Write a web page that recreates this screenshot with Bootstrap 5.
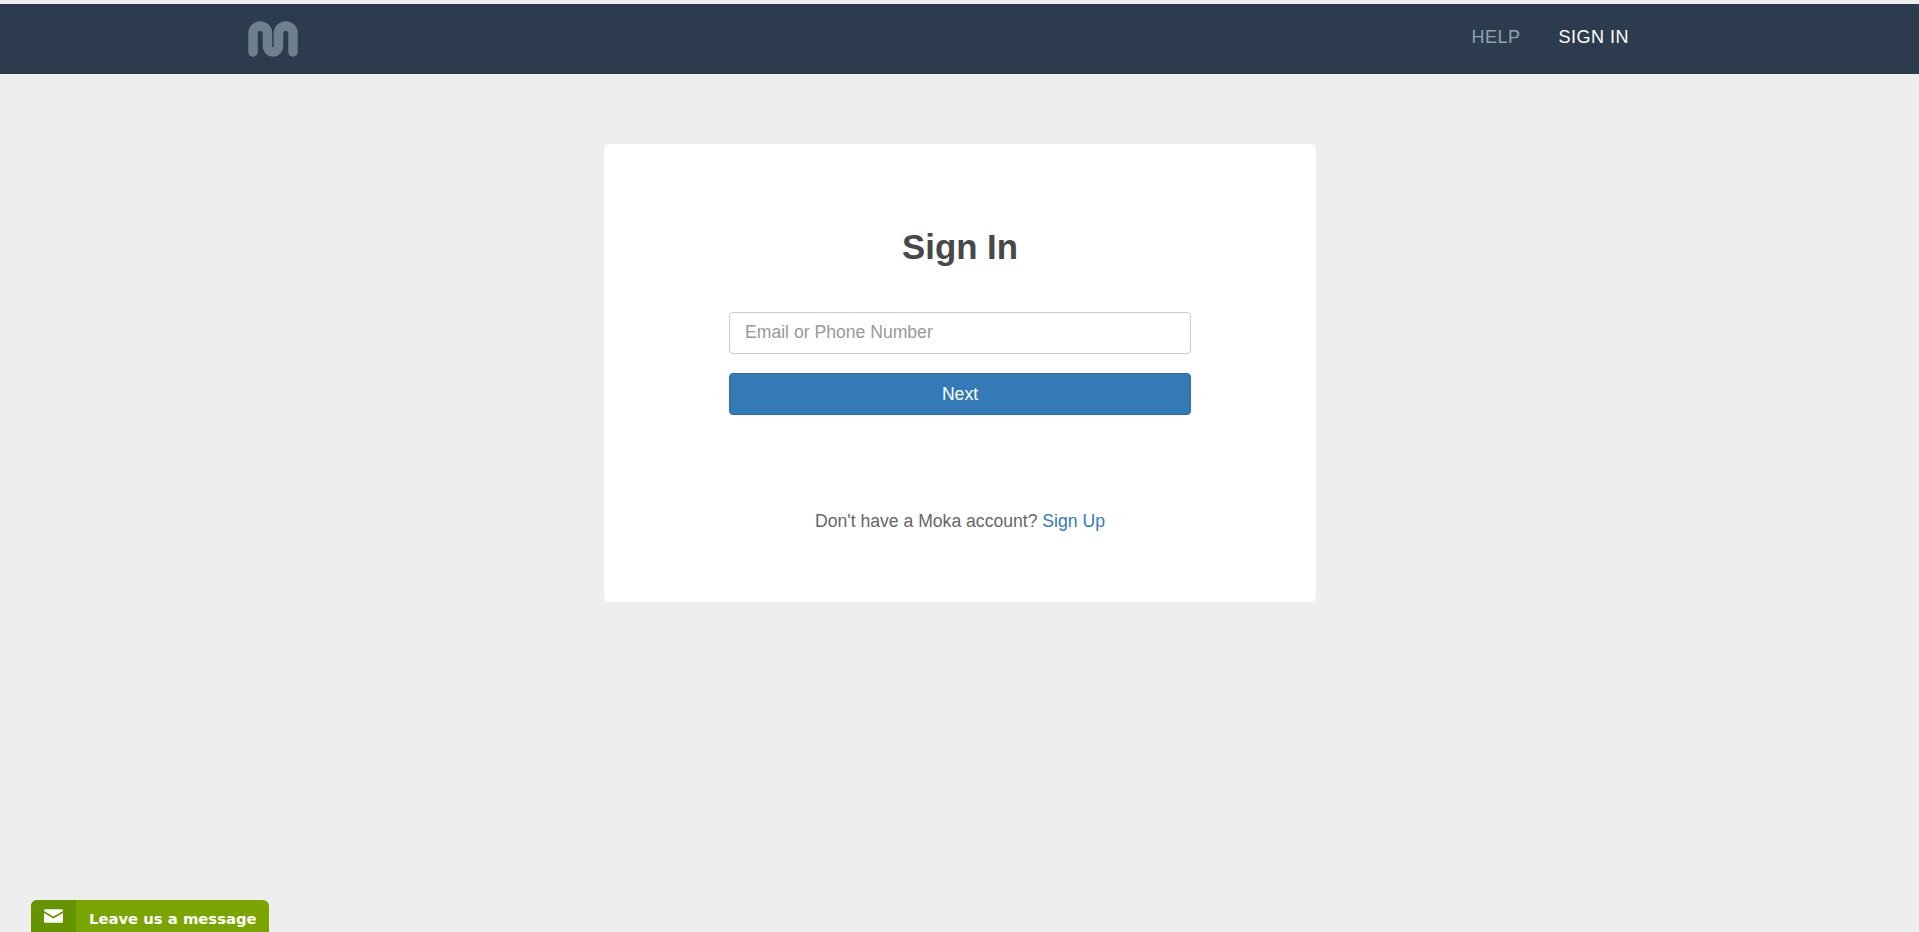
<!DOCTYPE html>
<html lang="en">
<head>
    <meta charset="UTF-8">
    <meta name="viewport" content="width=device-width, initial-scale=1.0">
    <title>Moka - Sign In</title>
    <link href="https://cdn.jsdelivr.net/npm/bootstrap@5.3.0/dist/css/bootstrap.min.css" rel="stylesheet">
    <style>
        html, body {
            height: 100%;
            overflow: hidden;
        }
        body {
            background-color: #eee;
            font-family: "Liberation Sans", Arial, sans-serif;
            font-size: 17.6px;
            color: #666;
            padding-top: 4px;
        }
        .top-bar {
            background-color: #2c3c4e;
            height: 70px;
            padding: 0 0 0 248px;
        }
        .top-logo {
            width: 50px;
            height: 36px;
            display: block;
        }
        .top-links {
            width: 1331px;
            gap: 38px;
            font-size: 18px;
            letter-spacing: 0.5px;
            padding-bottom: 4px;
        }
        .top-links a {
            color: #fff;
            text-decoration: none;
        }
        .top-links a.help-link {
            color: #8fa3ad;
        }
        .signin-box {
            width: 712px;
            height: 458px;
            margin: 70px 0 0 604px;
            background-color: #fff;
            border-radius: 6px;
            padding: 83px 125px 0;
        }
        .signin-title {
            font-family: "Liberation Sans", Arial, sans-serif;
            font-size: 34.8px;
            font-weight: 700;
            color: #484848;
            line-height: 40px;
            margin: 0 0 45px;
        }
        .signin-input.form-control {
            height: 42px;
            font-size: 17.6px;
            padding: 4px 15px 6px;
            border: 1px solid #ccc;
            border-radius: 4px;
            color: #555;
            margin-bottom: 19px;
        }
        .signin-input::placeholder {
            color: #999;
        }
        .signin-next.btn {
            height: 42px;
            font-size: 17.6px;
            color: #fff;
            background-color: #337ab7;
            border: 1px solid #2e6da4;
            border-radius: 4px;
        }
        .signup-line {
            margin-top: 95px;
            line-height: 22px;
        }
        .signup-line a {
            color: #337ab7;
            text-decoration: none;
        }
        .msg-widget {
            position: fixed;
            left: 31px;
            bottom: 0;
            width: 238px;
            height: 32px;
            background-color: #7aa500;
            border-radius: 6px 6px 0 0;
            overflow: hidden;
            font-family: "DejaVu Sans", Verdana, sans-serif;
            font-size: 14.8px;
            font-weight: 700;
            color: #fff;
        }
        .msg-icon {
            width: 45px;
            height: 100%;
            background-color: #669400;
        }
        .msg-label {
            padding-left: 13px;
            padding-top: 6px;
        }
    </style>
</head>
<body>
    <!-- Top bar -->
    <header class="top-bar d-flex align-items-center">
        <svg class="top-logo" viewBox="0 0 50 36" aria-label="Moka">
            <path d="M5 31V12.25a7.25 7.25 0 0 1 14.5 0V25.500a5.500 5.500 0 0 0 11 0V12.25a7.25 7.25 0 0 1 14.500 0V31" fill="none" stroke="#6e7f8e" stroke-width="9.500" stroke-linecap="round"/>
        </svg>
        <nav class="top-links d-flex justify-content-end">
            <a class="help-link" href="#">HELP</a>
            <a href="#">SIGN IN</a>
        </nav>
    </header>

    <!-- Sign in card -->
    <main class="signin-box text-center">
        <h1 class="signin-title">Sign In</h1>
        <form>
            <input class="signin-input form-control" type="text" placeholder="Email or Phone Number">
            <button class="signin-next btn w-100" type="button">Next</button>
        </form>
        <p class="signup-line mb-0">Don't have a Moka account? <a href="#">Sign Up</a></p>
    </main>

    <!-- Message widget -->
    <div class="msg-widget d-flex align-items-center">
        <div class="msg-icon d-flex align-items-center justify-content-center">
            <svg width="19" height="14" viewBox="0 0 21 15">
                <path d="M1.5 0h18A1.5 1.5 0 0 1 21 1.5v.6l-10.5 6L0 2.100v-.6A1.500 1.500 0 0 1 1.500 0z" fill="#fff"/>
                <path d="M0 4.200l10.500 6 10.500-6v9.300a1.500 1.500 0 0 1-1.500 1.500h-18A1.500 1.500 0 0 1 0 13.500z" fill="#fff"/>
            </svg>
        </div>
        <span class="msg-label">Leave us a message</span>
    </div>

    <script src="https://cdn.jsdelivr.net/npm/bootstrap@5.3.0/dist/js/bootstrap.bundle.min.js"></script>
</body>
</html>
